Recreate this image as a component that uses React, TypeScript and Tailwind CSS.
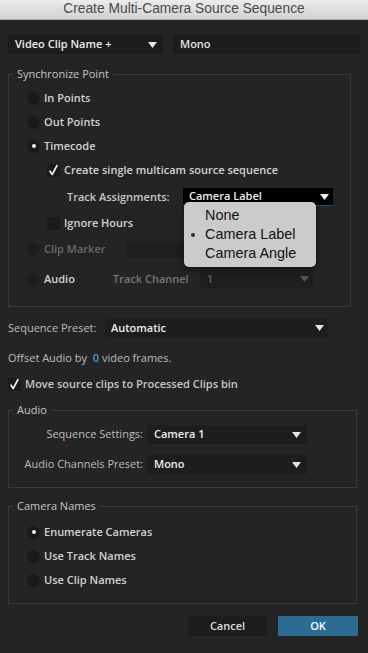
import React from "react";

const Arrow = ({ color = "#e6e6e6" }: { color?: string }) => (
  <svg width="9" height="6" viewBox="0 0 9 6">
    <path d="M0 0 L9 0 L4.5 6 Z" fill={color} />
  </svg>
);

const Check = () => (
  <svg width="13" height="13" viewBox="0 0 13 13">
    <path d="M3 7.2 L5.2 10.5 L10 1.5" stroke="#f2f2f2" strokeWidth="1.6" fill="none" strokeLinecap="round" strokeLinejoin="round" />
  </svg>
);

const Radio = ({ on = false, disabled = false }: { on?: boolean; disabled?: boolean }) => (
  <div className={`w-[13px] h-[13px] rounded-full flex items-center justify-center ${disabled ? "bg-[#1d1d1d]" : "bg-[#191919]"}`}>
    {on && <div className="w-[4px] h-[4px] rounded-full bg-[#f0f0f0]" />}
  </div>
);

const CheckBox = ({ on = false }: { on?: boolean }) => (
  <div className="w-[13px] h-[13px] rounded-[2px] bg-[#1a1a1a] flex items-center justify-center">{on && <Check />}</div>
);

const Legend = ({ children }: { children: React.ReactNode }) => (
  <legend className="ml-[4px] px-[4px] h-[14px] leading-[14px] text-[11px] font-medium text-[#c4c4c4]">{children}</legend>
);

export default function App() {
  return (
    <div
      className="relative w-[368px] h-[653px] bg-[#242424] overflow-hidden text-[11px] text-[#d2d2d2]"
      style={{ fontFamily: '"Open Sans", "DejaVu Sans", sans-serif' }}
    >
      {/* Title bar */}
      <div
        className="h-[20px] bg-gradient-to-b from-[#ececec] to-[#d2d2d2] border-b border-[#a9a9a9] flex items-center justify-center text-[13.8px] text-[#4a4a4a]"
        style={{ fontFamily: '"Liberation Sans", Arial, sans-serif' }}
      >
        Create Multi-Camera Source Sequence
      </div>

      <div className="px-[8px]">
        {/* Row 1 */}
        <div className="mt-[15px] flex gap-[10px] h-[19px]">
          <div className="w-[155px] bg-[#1c1c1c] flex items-center justify-between pl-[7px] pr-[6px]">
            <span className="font-semibold text-[#ececec]">Video Clip Name +</span>
            <Arrow />
          </div>
          <div className="flex-1 bg-[#1c1c1c] flex items-center pl-[7px] font-semibold text-[#e2e2e2]">Mono</div>
        </div>

        {/* Synchronize Point */}
        <fieldset className="mt-[13px] w-[343px] h-[240px] border border-[#3a3a3a]">
          <Legend>Synchronize Point</Legend>
          <div className="pl-[18px] pt-[5px]">
            <div className="h-[24px] flex items-center gap-[4px]">
              <Radio />
              <span className="font-semibold">In Points</span>
            </div>
            <div className="h-[24px] flex items-center gap-[4px]">
              <Radio />
              <span className="font-semibold">Out Points</span>
            </div>
            <div className="h-[24px] flex items-center gap-[4px]">
              <Radio on />
              <span className="font-semibold">Timecode</span>
            </div>
            <div className="h-[24px] flex items-center gap-[4px] pl-[20px]">
              <CheckBox on />
              <span className="font-semibold">Create single multicam source sequence</span>
            </div>
            <div className="h-[30px] flex items-center pl-[40px]">
              <span className="font-semibold text-[#c8c8c8] w-[116px]">Track Assignments:</span>
              <div className="w-[150px] h-[18px] bg-black flex items-center justify-between pl-[6px] pr-[4px] border-b border-b-[#20547a]">
                <span className="font-semibold text-[#f0f0f0]">Camera Label</span>
                <Arrow color="#f0f0f0" />
              </div>
            </div>
            <div className="h-[22px] flex items-center gap-[4px] pl-[20px]">
              <CheckBox />
              <span className="font-semibold">Ignore Hours</span>
            </div>
            <div className="h-[30px] flex items-center">
              <Radio disabled />
              <span className="ml-[4px] w-[83px] font-semibold text-[#6a6a6a]">Clip Marker</span>
              <div className="w-[182px] h-[17px] bg-[#1e1e1e]" />
            </div>
            <div className="h-[30px] flex items-center">
              <Radio disabled />
              <span className="ml-[4px] w-[69px] font-semibold text-[#d2d2d2]">Audio</span>
              <span className="w-[87px] font-semibold text-[#767676]">Track Channel</span>
              <div className="w-[113px] h-[17px] bg-[#1e1e1e] flex items-center justify-between pl-[7px] pr-[4px]">
                <span className="font-semibold text-[#5e5e5e]">1</span>
                <Arrow color="#555555" />
              </div>
            </div>
          </div>
        </fieldset>

        {/* Sequence Preset */}
        <div className="mt-[12px] h-[18px] flex items-center">
          <span className="w-[97px] text-[#bcbcbc] font-medium">Sequence Preset:</span>
          <div className="w-[223px] h-[18px] bg-[#1d1d1d] flex items-center justify-between pl-[6px] pr-[4px]">
            <span className="font-semibold text-[#ececec]">Automatic</span>
            <Arrow />
          </div>
        </div>

        <div className="mt-[12px] h-[18px] flex items-center text-[#bcbcbc] font-medium">
          <span>Offset Audio by&nbsp;&nbsp;</span>
          <span className="text-[#3d9fd6] font-semibold">0</span>
          <span>&nbsp;video frames.</span>
        </div>

        <div className="mt-[9px] h-[16px] flex items-center gap-[4px]">
          <CheckBox on />
          <span className="font-semibold text-[#c8c8c8]">Move source clips to Processed Clips bin</span>
        </div>

        {/* Audio group */}
        <fieldset className="mt-[11px] w-[349px] h-[85px] border border-[#3a3a3a] pt-[8px]">
          <Legend>Audio</Legend>
          <div className="h-[19px] flex items-center">
            <span className="w-[138px] pr-[4px] text-right font-medium text-[#bcbcbc]">Sequence Settings:</span>
            <div className="w-[160px] h-[19px] bg-[#1d1d1d] flex items-center justify-between pl-[7px] pr-[6px]">
              <span className="font-semibold text-[#ececec]">Camera 1</span>
              <Arrow />
            </div>
          </div>
          <div className="mt-[11px] h-[19px] flex items-center">
            <span className="w-[138px] pr-[4px] text-right font-medium text-[#bcbcbc]">Audio Channels Preset:</span>
            <div className="w-[160px] h-[19px] bg-[#1d1d1d] flex items-center justify-between pl-[7px] pr-[6px]">
              <span className="font-semibold text-[#ececec]">Mono</span>
              <Arrow />
            </div>
          </div>
        </fieldset>

        {/* Camera Names */}
        <fieldset className="mt-[11px] w-[349px] h-[105px] border border-[#3a3a3a]">
          <Legend>Camera Names</Legend>
          <div className="pl-[18px] pt-[7px]">
            <div className="h-[24px] flex items-center gap-[4px]">
              <Radio on />
              <span className="font-semibold">Enumerate Cameras</span>
            </div>
            <div className="h-[24px] flex items-center gap-[4px]">
              <Radio />
              <span className="font-semibold">Use Track Names</span>
            </div>
            <div className="h-[24px] flex items-center gap-[4px]">
              <Radio />
              <span className="font-semibold">Use Clip Names</span>
            </div>
          </div>
        </fieldset>

        {/* Buttons */}
        <div className="mt-[12px] flex justify-end gap-[11px] pr-[2px]">
          <div className="w-[79px] h-[20px] bg-[#1d1d1d] flex items-center justify-center font-semibold text-[#dcdcdc]">Cancel</div>
          <div className="w-[80px] h-[20px] bg-[#2b6b94] flex items-center justify-center font-semibold text-white">OK</div>
        </div>
      </div>

      {/* Popup menu */}
      <div
        className="absolute left-[184px] top-[202px] w-[132px] h-[65px] rounded-[5px] bg-[#cbcbcb] shadow-[0_2px_6px_rgba(0,0,0,0.5)] pt-[4px] text-[14.4px] text-[#111111]"
        style={{ fontFamily: '"Liberation Sans", Arial, sans-serif' }}
      >
        <div className="h-[19px] leading-[19px] pl-[21px]">None</div>
        <div className="h-[19px] leading-[19px] pl-[21px] relative">
          <span className="absolute left-[7px] top-[8px] w-[4px] h-[4px] rounded-full bg-[#333333]" />
          Camera Label
        </div>
        <div className="h-[19px] leading-[19px] pl-[21px]">Camera Angle</div>
      </div>
    </div>
  );
}
